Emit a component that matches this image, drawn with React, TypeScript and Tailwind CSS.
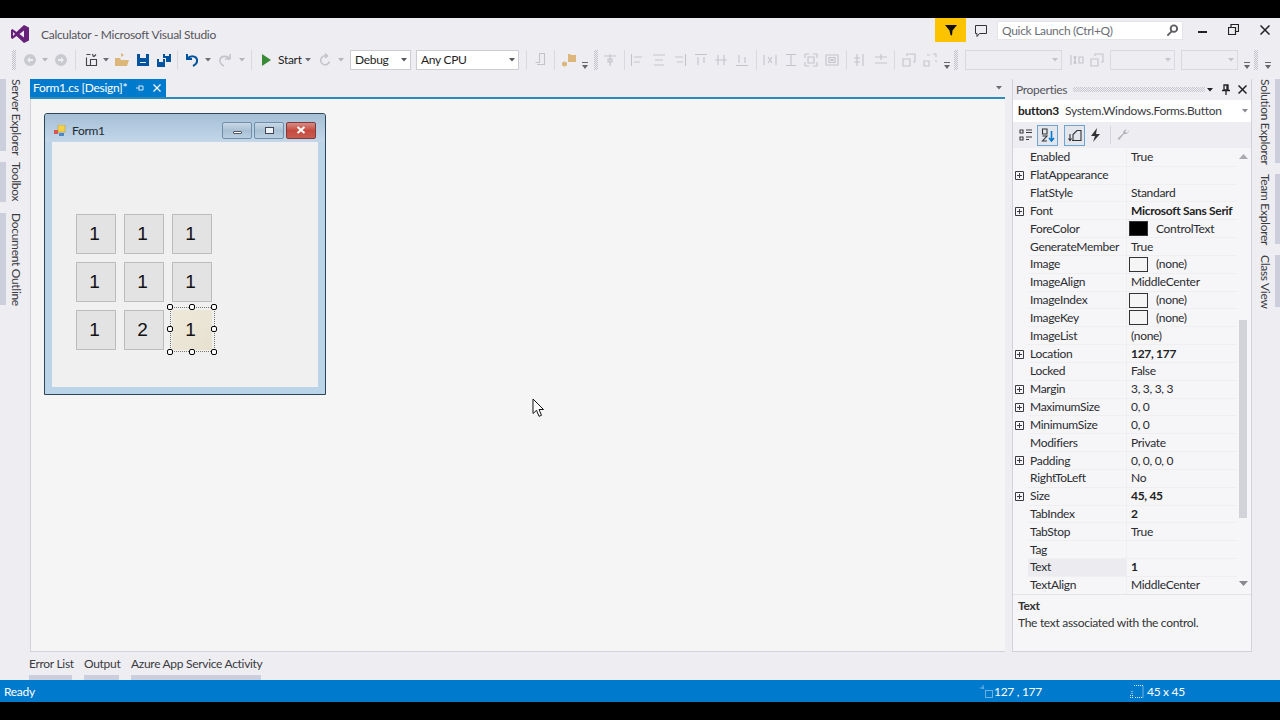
import { ReactNode } from "react";

const gray = "#a6a7ad";

// 16px toolbar glyph, drawn in stroke unless it has its own fill
function Ico({ d, className = "", color = gray, fill = "none", sw = 1.1 }: { d: string; className?: string; color?: string; fill?: string; sw?: number }) {
  return (
    <svg viewBox="0 0 16 16" className={`w-4 h-4 shrink-0 ${className}`} fill={fill} fillRule="evenodd" stroke={fill === "none" ? color : "none"} strokeWidth={sw}>
      <path d={d} />
    </svg>
  );
}

function Sep({ className = "" }: { className?: string }) {
  return <div className={`w-px h-[20px] bg-[#d9dae0] shrink-0 ${className}`} />;
}

function Drop({ className = "", color = "#6d6d75" }: { className?: string; color?: string }) {
  return (
    <svg viewBox="0 0 6 4" className={`w-[6px] h-1 shrink-0 ${className}`} fill={color}>
      <path d="M0 0h6L3 3.5z" />
    </svg>
  );
}

function Overflow({ className = "" }: { className?: string }) {
  return (
    <svg viewBox="0 0 6 8" className={`w-[6px] h-2 shrink-0 mt-3 ${className}`} fill="#66666c">
      <path d="M0 0h6v1H0zM0 3h6L3 7z" />
    </svg>
  );
}

function Grip({ className = "" }: { className?: string }) {
  return <div className={`w-1 h-[20px] shrink-0 bg-[repeating-conic-gradient(#c2c3ca_0_25%,transparent_0_50%)] bg-[length:2px_2px] ${className}`} />;
}

function Combo({ className = "", children, muted }: { className?: string; children?: ReactNode; muted?: boolean }) {
  return (
    <div className={`h-[20px] shrink-0 flex items-center justify-between pl-1 pr-[3px] border ${muted ? "bg-[#eeeef2] border-[#d9dae0]" : "bg-white border-[#cccdd3]"} ${className}`}>
      <span className="text-[12px] text-[#1e1e1e]">{children}</span>
      <Drop color={muted ? "#c4c5cb" : "#55555c"} />
    </div>
  );
}

const alignLeft = "M2.5 2v12M5 5h8M5 10h6";
const alignCenter = "M2 3h12M4 8h8M3 13h10";
const alignRight = "M13.5 2v12M3 5h8M5 10h6";
const alignTop = "M2 2.5h12M5 5v8M11 5v6";
const alignMiddle = "M5 3v10M11 3v10M2 8h12";
const alignBottom = "M2 13.5h12M5 3v8M11 5v6";

const rows: { name: string; value?: string; bold?: boolean; plus?: boolean; swatch?: string }[] = [
  { name: "Enabled", value: "True" },
  { name: "FlatAppearance", plus: true },
  { name: "FlatStyle", value: "Standard" },
  { name: "Font", value: "Microsoft Sans Serif", bold: true, plus: true },
  { name: "ForeColor", value: "ControlText", swatch: "bg-black" },
  { name: "GenerateMember", value: "True" },
  { name: "Image", value: "(none)", swatch: "bg-[#f5f5f5]" },
  { name: "ImageAlign", value: "MiddleCenter" },
  { name: "ImageIndex", value: "(none)", swatch: "bg-[#f5f5f5]" },
  { name: "ImageKey", value: "(none)", swatch: "bg-[#f5f5f5]" },
  { name: "ImageList", value: "(none)" },
  { name: "Location", value: "127, 177", bold: true, plus: true },
  { name: "Locked", value: "False" },
  { name: "Margin", value: "3, 3, 3, 3", plus: true },
  { name: "MaximumSize", value: "0, 0", plus: true },
  { name: "MinimumSize", value: "0, 0", plus: true },
  { name: "Modifiers", value: "Private" },
  { name: "Padding", value: "0, 0, 0, 0", plus: true },
  { name: "RightToLeft", value: "No" },
  { name: "Size", value: "45, 45", bold: true, plus: true },
  { name: "TabIndex", value: "2", bold: true },
  { name: "TabStop", value: "True" },
  { name: "Tag" },
  { name: "Text", value: "1", bold: true },
  { name: "TextAlign", value: "MiddleCenter" },
];

function PropRow({ name, value, bold, plus, swatch }: (typeof rows)[number]) {
  return (
    <div className="h-[17.83px] shrink-0 flex items-center">
      <div className="w-[14px] h-full pr-[3px] flex items-center justify-center shrink-0">
        {plus && (
          <svg viewBox="0 0 9 9" className="w-[9px] h-[9px]" fill="none" stroke="#3a3a40">
            <path d="M.5.5h8v8h-8zM2 4.5h5M4.5 2v5" />
          </svg>
        )}
      </div>
      <div className={`w-[99px] h-full pl-[2px] flex items-center shrink-0 border-r border-b border-[#efeff1] text-[#2b2b30] ${name === "Text" ? "bg-[#ebebf0]" : ""}`}>
        {name}
      </div>
      <div className={`w-[110px] h-full pl-[4px] flex items-center shrink-0 border-b border-[#efeff1] whitespace-nowrap overflow-hidden ${bold ? "font-bold text-[#222]" : "text-[#2b2b30]"}`}>
        {swatch && <span className={`w-[19px] h-[15px] mr-2 -ml-[2px] border border-[#333] shrink-0 ${swatch}`} />}
        {value}
      </div>
    </div>
  );
}

function FormButton({ label, selected }: { label: string; selected?: boolean }) {
  return (
    <div className={`relative w-10 h-10 flex items-center justify-center pr-[3px] font-['Liberation_Sans',sans-serif] tracking-normal text-[19px] text-[#111] ${selected ? "bg-gradient-to-br from-[#eee9da] to-[#e6e1cf]" : "bg-[#e3e3e3] border border-[#bcbcbc]"}`}>
      {label}
      {selected && (
        <>
          <div className="absolute -left-[2px] -top-[3px] w-[45px] h-[45px] border border-dotted border-[#77776c]" />
          <Handle className="-left-[5px] -top-[6px]" />
          <Handle className="left-[17px] -top-[6px]" />
          <Handle className="left-[39px] -top-[6px]" />
          <Handle className="-left-[5px] top-[16px]" />
          <Handle className="left-[39px] top-[16px]" />
          <Handle className="-left-[5px] top-[39px]" />
          <Handle className="left-[17px] top-[39px]" />
          <Handle className="left-[39px] top-[39px]" />
        </>
      )}
    </div>
  );
}

function Handle({ className }: { className: string }) {
  return <div className={`absolute w-[6px] h-[6px] rounded-[2px] bg-white border border-black ${className}`} />;
}

function Caption({ className, children }: { className: string; children: ReactNode }) {
  return <div className={`h-[17px] rounded-[2px] border border-[#6f8fa9] flex items-center justify-center ${className}`}>{children}</div>;
}

function SideTab({ label, className = "" }: { label: string; className?: string }) {
  return <div className={`[writing-mode:vertical-rl] text-[12px] leading-none text-[#3a3a40] whitespace-nowrap ${className}`}>{label}</div>;
}

export default function App() {
  return (
    <div className="w-[1280px] h-[720px] bg-black flex flex-col overflow-hidden font-['Lato',sans-serif] text-[12px] tracking-[-0.3px]">
      <div className="h-[18px] shrink-0" />

      <div className="h-[662px] shrink-0 bg-[#eeeef2] flex flex-col">
        {/* title bar */}
        <div className="h-[26px] shrink-0 flex items-start">
          <svg viewBox="0 0 20 20" className="w-5 h-5 ml-[10px] mt-[6px] shrink-0" fill="#68217a" fillRule="evenodd">
            <path d="M14 1l5 2.5v13L14 19l-7.5-7-4 3L1 14V6l1.500-1 4 3zM14 6.500L9.500 10l4.500 3.500zM3 8v4l2-2z" />
          </svg>
          <div className="ml-[11px] mt-[9px] text-[12px] leading-[15px] text-[#55555c]">Calculator - Microsoft Visual Studio</div>
          <div className="flex-1" />
          <div className="w-[31px] h-6 bg-[#fcc400] flex items-center justify-center">
            <svg viewBox="0 0 12 12" className="w-3 h-3" fill="#111">
              <path d="M0 1h12L7.500 6.500 7 11.500 5.500 11 4.500 6.500z" />
            </svg>
          </div>
          <svg viewBox="0 0 16 16" className="w-4 h-4 ml-[7px] mt-[5px]" fill="none" stroke="#333">
            <path d="M2.500 2.500h11v8h-7l-2.500 3v-3h-1.500z" />
          </svg>
          <div className="ml-[8px] mt-[3px] w-[186px] h-[19px] bg-white border border-[#e4e4e8] flex items-center justify-between pl-1 pr-[3px] text-[12px] text-[#6d6d75]">
            Quick Launch (Ctrl+Q)
            <svg viewBox="0 0 14 14" className="w-[13px] h-[13px]" fill="none" stroke="#5a5a60" strokeWidth={2}>
              <circle cx="8.500" cy="5" r="3.500" />
              <path d="M6 8l-4.500 4.500" />
            </svg>
          </div>
          <div className="w-[97px] flex items-center shrink-0 mt-[6px]">
            <div className="ml-[15px] mt-[5px] w-[9px] h-[2px] bg-[#222]" />
            <svg viewBox="0 0 11 11" className="w-[11px] h-[11px] ml-[21px]" fill="none" stroke="#222" strokeWidth={1.200}>
              <path d="M.5 3.500h7v7h-7zM3 3.500V.5h7.500v7H7.500" />
            </svg>
            <svg viewBox="0 0 10 10" className="w-[10px] h-[10px] ml-[21px]" fill="none" stroke="#222" strokeWidth={1.500}>
              <path d="M.5.5l9 9M9.500.5l-9 9" />
            </svg>
          </div>
        </div>

        {/* toolbar */}
        <div className="h-[32px] shrink-0 flex items-center">
          <Grip className="ml-[12px]" />
          <Ico className="ml-[6px]" fill="#c9cad0" d="M8 2a6 6 0 100 12A6 6 0 008 2zM5 8l3-3v2h3v2H8v2z" />
          <Drop className="ml-[4px]" color="#b5b6bc" />
          <Ico className="ml-[5px]" fill="#c9cad0" d="M8 2a6 6 0 100 12A6 6 0 008 2zm3 6l-3 3V9H5V7h3V5z" />
          <Sep className="ml-[6px]" />
          <Ico className="ml-[7px]" color="#424248" d="M3.500 5.500v8h4M3.500 2.500h4M7.500 7.500h6v6h-6zM9.500 2l1 3M13 2.500l-2 2" />
          <Drop className="ml-[4px]" />
          <Ico className="ml-[5px]" fill="#dcb67a" d="M1 6h5l1 2h8l-2 6H1zM7 1l3 2-3 2z" />
          <Ico className="ml-[5px]" fill="#00539c" d="M2 2h12v12H2zM5 2v4h6V2zM5 10v1h6v-1z" />
          <Ico className="ml-[5px]" fill="#00539c" d="M1 7h8v8H1zM3 7v3h4V7zM7 2h8v8h-5V6H7zM9 2v2h4V2z" />
          <Sep className="ml-[5px]" />
          <Ico className="ml-[6px]" color="#00539c" sw={2} d="M3 2v5h5M3.500 6.500C6 3.500 12 3.500 13 7.500c.5 3-1 5-4 6.500" />
          <Drop className="ml-[5px]" />
          <Ico className="ml-[6px]" color="#c3c4ca" sw={1.6} d="M13 2v5H8M12.500 6.500C10 3.500 4 3.500 3 7.500c-.5 3 1 5 4 6.500" />
          <Drop className="ml-[6px]" color="#b5b6bc" />
          <Sep className="ml-[6px]" />
          <Ico className="ml-[6px]" fill="#388a34" d="M4 2l9 6-9 6z" />
          <span className="ml-[4px] w-[23px] shrink-0 text-[12px] text-[#1e1e1e]">Start</span>
          <Drop className="ml-[4px]" />
          <Ico className="ml-[6px]" color="#c3c4ca" sw={1.5} d="M12.500 9.500a4.500 4.500 0 11-3-5.500M8 1.500l2.500 2.500L8 6" />
          <Drop className="ml-[5px]" color="#b5b6bc" />
          <Combo className="ml-[6px] w-[61px]">Debug</Combo>
          <Combo className="ml-[5px] w-[103px]">Any CPU</Combo>
          <Sep className="ml-[7px]" />
          <Ico className="ml-[6px]" color="#c3c4ca" d="M4 12.500h7.500v-11H6.500v9H2.500" />
          <Sep className="ml-[5px]" />
          <Ico className="ml-[6px]" fill="#dcb67a" d="M7 2h2l1 1h5v7H7zM3.500 9.500a2.500 2.500 0 110 5 2.500 2.500 0 010-5z" />
          <Overflow className="ml-[5px]" />
          <Grip className="ml-[6px]" />
          <Ico className="ml-[4px]" color="#c3c4ca" d="M8 2v12M2 4h12M6 7h4v3H6z" />
          <Sep className="ml-[6px]" />
          <Ico className="ml-[4px]" color="#c3c4ca" d={alignLeft} />
          <Ico className="ml-[6px]" color="#c3c4ca" d={alignCenter} />
          <Ico className="ml-[5px]" color="#c3c4ca" d={alignRight} />
          <Ico className="ml-[5px]" color="#c3c4ca" d={alignTop} />
          <Ico className="ml-[4px]" color="#c3c4ca" d={alignMiddle} />
          <Ico className="ml-[5px]" color="#c3c4ca" d={alignBottom} />
          <Sep className="ml-[6px]" />
          <Ico className="ml-[5px]" color="#c3c4ca" d="M2 3v10M14 3v10M6 5l4 6M10 5l-4 6" />
          <Ico className="ml-[5px]" color="#c3c4ca" d="M3 2.500h10M3 13.500h10M8 3v10" />
          <Ico className="ml-[4px]" color="#c3c4ca" d="M2 2h4M10 2h4M2 14h4M10 14h4M2 2v4M14 2v4M2 10v4M14 10v4M5 5h6v6H5z" />
          <Ico className="ml-[5px]" color="#c3c4ca" d="M2 3h12v10H2zM5 5.500h6v5H5zM7 7.500h2v1H7z" />
          <Sep className="ml-[6px]" />
          <Ico className="ml-[5px]" color="#c3c4ca" d="M5 2v12M11 2v12M2 6h6M2 10h6" />
          <Ico className="ml-[5px]" color="#c3c4ca" d="M2 5h12M2 11h12M8 2v6" />
          <Sep className="ml-[5px]" />
          <Ico className="ml-[6px]" color="#c3c4ca" d="M2 7h7v7H2zM6 4V2h8v8h-2" />
          <Ico className="ml-[5px]" color="#c3c4ca" d="M2 9h5v5H2zM5 3h3M11 2h3v3M14 8v2" />
          <Overflow className="ml-[6px]" />
          <Grip className="ml-[4px]" />
          <Combo muted className="ml-[7px] w-[97px]" />
          <Ico className="ml-[7px]" color="#c3c4ca" d="M2 3v10M5 4l2 8M7 4l-2 8M10 5h4v6h-4z" />
          <Ico className="ml-[4px]" color="#c3c4ca" d="M2 7h7v7H2zM6 4V2h8v8h-2" />
          <Combo muted className="ml-[5px] w-[65px]" />
          <Combo muted className="ml-[6px] w-[57px]" />
          <Overflow className="ml-[6px]" />
          <Grip className="ml-[4px]" />
          <Overflow className="ml-[7px]" />
        </div>

        <div className="h-[3px] shrink-0" />

        {/* main row */}
        <div className="h-[573px] shrink-0 flex">
          <div className="w-[30px] shrink-0 flex flex-col">
            <div className="h-[72px] flex">
              <div className="w-[6px] bg-[#cccedb] mr-[4px]" />
              <SideTab label="Server Explorer" />
            </div>
            <div className="h-[40px] mt-[11px] flex">
              <div className="w-[6px] bg-[#cccedb] mr-[4px]" />
              <SideTab label="Toolbox" />
            </div>
            <div className="h-[92px] mt-[11px] flex">
              <div className="w-[6px] bg-[#cccedb] mr-[4px]" />
              <SideTab label="Document Outline" />
            </div>
          </div>

          {/* document well */}
          <div className="w-[975px] shrink-0 flex flex-col">
            <div className="h-[18px] shrink-0 flex items-center">
              <div className="h-full w-[136px] bg-[#007acc] text-white text-[12px] flex items-center pl-[3px] whitespace-nowrap">
                <span className="w-[103px] shrink-0">Form1.cs [Design]*</span>
                <svg viewBox="0 0 8 8" className="w-2 h-2 shrink-0" fill="none" stroke="#d5e8f5">
                  <path d="M0 4h3M3 1.500v5M3 2h4v4H3" />
                </svg>
                <svg viewBox="0 0 8 8" className="w-2 h-2 ml-[9px] shrink-0" fill="none" stroke="#fff" strokeWidth={1.200}>
                  <path d="M.5.5l7 7M7.500.5l-7 7" />
                </svg>
              </div>
              <div className="flex-1" />
              <Drop className="mr-[3px]" />
            </div>
            <div className="h-[2px] shrink-0 bg-[#2b8cbb]" />
            <div className="flex-1 bg-[#f5f5f5] border-l border-b border-[#d2d3da] pl-[13px] pt-[14px]">
              {/* Form1 designer surface */}
              <div className="w-[282px] h-[282px] rounded-t-[3px] border border-[#2c4858] bg-[#bcd4e8] flex flex-col">
                <div className="h-[28px] shrink-0 flex items-center bg-gradient-to-b from-[#a6bfd6] to-[#c3d7e9] rounded-t-[3px]">
                  <svg viewBox="0 0 12 12" className="w-3 h-3 ml-[9px] mt-[6px]">
                    <rect x="0" y="5" width="4" height="4" fill="#d9534f" />
                    <rect x="4" y="0" width="7" height="7" fill="#f3d24a" stroke="#b89420" strokeWidth="0.5" />
                    <rect x="5" y="8" width="5" height="3" fill="#4f86c6" />
                  </svg>
                  <span className="ml-[6px] mt-[6px] text-[12px] text-[#1e2a33]">Form1</span>
                  <div className="flex-1" />
                  <div className="flex gap-[2px] mr-[9px] mt-[4px]">
                    <Caption className="w-[30px] bg-gradient-to-b from-[#c8d9e8] via-[#a9c0d4] to-[#b9cfe1]">
                      <div className="w-[9px] h-[3px] mt-[4px] bg-white border border-[#556] rounded-[1px]" />
                    </Caption>
                    <Caption className="w-[30px] bg-gradient-to-b from-[#c8d9e8] via-[#a9c0d4] to-[#b9cfe1]">
                      <div className="w-[9px] h-[7px] bg-white/80 border border-[#445]" />
                    </Caption>
                    <Caption className="w-[30px] border-[#7d3a3a] bg-gradient-to-b from-[#d58b84] via-[#c64a3f] to-[#c75c50]">
                      <svg viewBox="0 0 10 8" className="w-[10px] h-2" fill="none" stroke="#fff" strokeWidth={2}>
                        <path d="M1.500 1l7 6M8.500 1l-7 6" />
                      </svg>
                    </Caption>
                  </div>
                </div>
                <div className="mx-[7px] h-[245px] shrink-0 bg-[#f0f0f0] pl-[24px] pt-[72px]">
                  <div className="grid grid-cols-[40px_40px_40px] gap-2">
                    <FormButton label="1" />
                    <FormButton label="1" />
                    <FormButton label="1" />
                    <FormButton label="1" />
                    <FormButton label="1" />
                    <FormButton label="1" />
                    <FormButton label="1" />
                    <FormButton label="2" />
                    <FormButton label="1" selected />
                  </div>
                </div>
              </div>
              <svg viewBox="0 0 14 20" className="w-[14px] h-5 ml-[488px] mt-[3px]" fill="#fff" stroke="#111">
                <path d="M1 1v14.500l3.500-3.200 2.500 6 2.500-1-2.500-5.800h4.500z" />
              </svg>
            </div>
          </div>

          <div className="w-[7px] shrink-0" />

          {/* properties panel */}
          <div className="w-[240px] shrink-0 flex flex-col border-x border-b border-[#d2d3da]">
            <div className="h-[21px] shrink-0 flex items-center pl-[3px] text-[#55555c]">
              <span className="w-[52px]">Properties</span>
              <div className="ml-[5px] w-[132px] h-[5px] bg-[repeating-conic-gradient(#c8c9d0_0_25%,transparent_0_50%)] bg-[length:2px_2px]" />
              <Drop className="ml-[2px]" color="#222" />
              <svg viewBox="0 0 8 11" className="w-2 h-[11px] ml-[9px]" fill="none" stroke="#222" strokeWidth={1.300}>
                <path d="M2 1h4v5H2zM0 6.500h8M4 7v4M5 1v5" />
              </svg>
              <svg viewBox="0 0 9 9" className="w-[9px] h-[9px] ml-[8px]" fill="none" stroke="#222" strokeWidth={1.500}>
                <path d="M.5.5l8 8M8.500.5l-8 8" />
              </svg>
            </div>
            <div className="h-[22px] shrink-0 bg-white flex items-center pl-[5px] pr-[3px]">
              <span className="font-bold text-[#222]">button3</span>
              <span className="ml-[6px] text-[#3a3a40]">System.Windows.Forms.Button</span>
              <div className="flex-1" />
              <Drop color="#888890" />
            </div>
            <div className="h-[26px] shrink-0 flex items-center pl-[5px]">
              <Ico color="#3a3a40" d="M2 3h3v3H2zM2 10h3v3H2zM8 3h6M8 5.500h6M8 10h6M8 12.500h3" />
              <div className="relative ml-[3px] w-[21px] h-[21px] flex items-center justify-center bg-[#e4e6ee] border border-[#6aa6cf]">
                <Ico color="#333" d="M2.500 2h4.500v5h-4.500zM2.500 9h4.500l-4.500 5h4.500" />
                <Ico color="#007acc" sw={1.600} className="absolute left-[2px] top-[2px]" d="M11.500 3v10M9 10l2.500 3 2.500-3" />
              </div>
              <div className="ml-[6px] w-[21px] h-[21px] flex items-center justify-center bg-[#e4e6ee] border border-[#6aa6cf]">
                <Ico color="#333" d="M5 13.500h9V3.500h-4l-4 4v6M3 7v6M1.500 11.500L3 13.500l1.500-2" />
              </div>
              <Ico className="ml-[3px]" fill="#333" d="M9 1L3 9h4l-2 6 7-8H8z" />
              <div className="ml-[6px] w-px h-[18px] bg-[#d4d5dc]" />
              <Ico className="ml-[4px]" fill="#b5b6bc" d="M14 3a4 4 0 01-5 4L4 13 2.500 11.500 8 6.500a4 4 0 014-4l-2 2 2 1.500z" />
            </div>

            <div className="h-[446px] shrink-0 bg-[#f6f6f8] flex overflow-hidden pl-[1px]">
              <div className="w-[223px] shrink-0 flex flex-col overflow-hidden pt-[1px]">
                {rows.map((r) => (
                  <PropRow key={r.name} {...r} />
                ))}
              </div>
              <div className="w-[12px] shrink-0 flex flex-col items-center">
                <svg viewBox="0 0 9 5" className="w-[9px] h-[5px] mt-[6px] shrink-0" fill="#a9aab0">
                  <path d="M4.500 0L9 5H0z" />
                </svg>
                <div className="w-2 h-[198px] mt-[161px] shrink-0 bg-[#d2d3d9]" />
                <svg viewBox="0 0 9 5" className="w-[9px] h-[5px] mt-[63px] shrink-0" fill="#88888e">
                  <path d="M0 0h9L4.500 5z" />
                </svg>
              </div>
            </div>

            <div className="flex-1 bg-[#f6f6f8] border-t border-[#e2e3e8] pl-[5px] pt-[2px] text-[#333]">
              <div className="font-bold leading-[17px]">Text</div>
              <div className="leading-[17px]">The text associated with the control.</div>
            </div>
          </div>

          <div className="w-[28px] shrink-0 flex flex-col">
            <div className="h-[84px] flex justify-between">
              <SideTab label="Solution Explorer" className="ml-[7px]" />
              <div className="w-[5px] bg-[#cccedb]" />
            </div>
            <div className="h-[70px] mt-[11px] flex justify-between">
              <SideTab label="Team Explorer" className="ml-[7px]" />
              <div className="w-[5px] bg-[#cccedb]" />
            </div>
            <div className="h-[52px] mt-[11px] flex justify-between">
              <SideTab label="Class View" className="ml-[7px]" />
              <div className="w-[5px] bg-[#cccedb]" />
            </div>
          </div>
        </div>

        {/* bottom tool tabs */}
        <div className="flex-1 flex pl-[29px] gap-[12px] text-[#3a3a40]">
          <div className="w-[43px] flex flex-col justify-end whitespace-nowrap">
            <span className="leading-[15px] mb-[4px]">Error List</span>
            <div className="h-[5px] bg-[#cccedb]" />
          </div>
          <div className="w-[35px] flex flex-col justify-end whitespace-nowrap">
            <span className="leading-[15px] mb-[4px]">Output</span>
            <div className="h-[5px] bg-[#cccedb]" />
          </div>
          <div className="w-[130px] flex flex-col justify-end whitespace-nowrap">
            <span className="leading-[15px] mb-[4px]">Azure App Service Activity</span>
            <div className="h-[5px] bg-[#cccedb]" />
          </div>
        </div>
      </div>

      {/* status bar */}
      <div className="h-[22px] shrink-0 bg-[#007acc] text-white flex items-center pl-1 pt-[1px] text-[12px]">
        <span>Ready</span>
        <div className="flex-1" />
        <div className="w-[150px] shrink-0 flex items-center">
          <svg viewBox="0 0 13 13" className="w-[13px] h-[13px] mr-[1px]" fill="none" stroke="#d5ebf9">
            <path d="M3 .5v3M.5 3h3M5.500 5.500h7v7h-7z" strokeDasharray="1 1" />
          </svg>
          <span>127 , 177</span>
        </div>
        <div className="w-[150px] shrink-0 flex items-center">
          <svg viewBox="0 0 14 13" className="w-[14px] h-[13px] mr-[3px]" fill="none" stroke="#d5ebf9">
            <path d="M4 .5h9v12H4M0 10.500h4M0 12.500h4M2 6v4" strokeDasharray="1 1" />
          </svg>
          <span>45 x 45</span>
        </div>
      </div>

      <div className="flex-1" />
    </div>
  );
}
